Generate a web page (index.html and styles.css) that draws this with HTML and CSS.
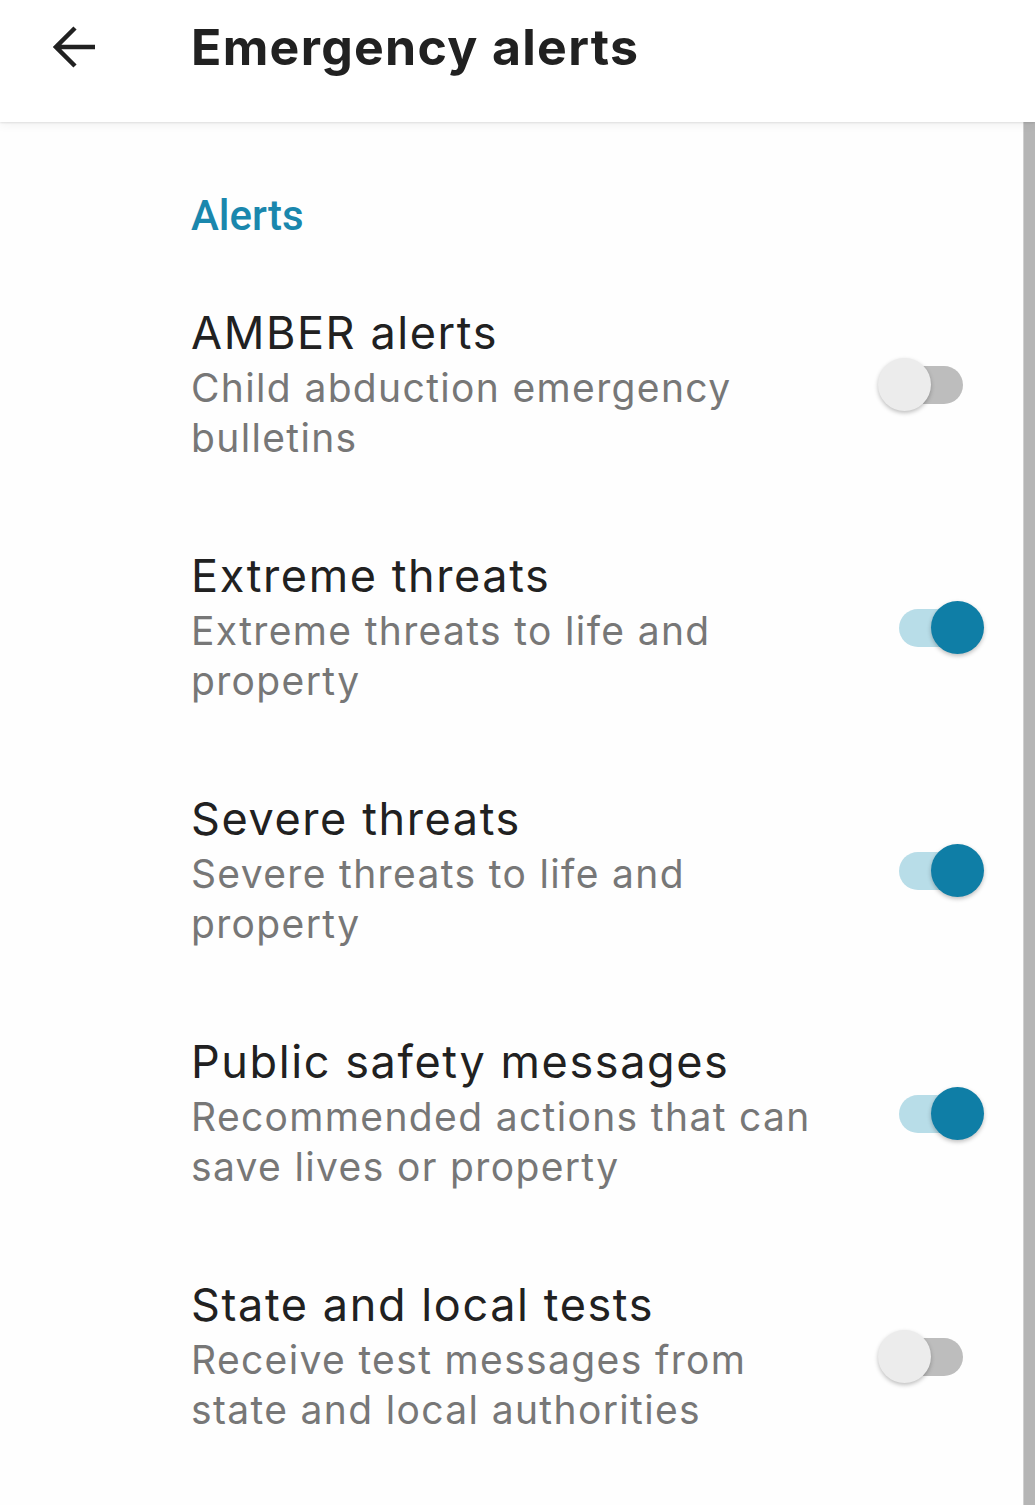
FILE: index.html
```html
<!DOCTYPE html>
<html lang="en">

<head>
    <meta charset="UTF-8">
    <meta name="viewport" content="width=device-width, initial-scale=1.0">
    <title>Emergency alerts</title>
    <link rel="stylesheet" href="styles.css">
</head>

<body>

    <div class="appbar">
        <div class="appbar-row">
            <button class="back-button" aria-label="Back">
                <svg width="44" height="42" viewBox="0 0 44 42">
                    <path d="M42 21H4M22 2L3 21l19 19" fill="none" stroke="#212121" stroke-width="4.5"
                        stroke-linejoin="miter" stroke-linecap="butt" />
                </svg>
            </button>
            <h1 class="appbar-title">Emergency alerts</h1>
        </div>
    </div>

    <div class="page">
        <div class="settings">
            <h2 class="category">Alerts</h2>

            <div class="pref-row">
                <div class="pref-text">
                    <div class="pref-title">AMBER alerts</div>
                    <div class="pref-summary">Child abduction emergency bulletins</div>
                </div>
                <div class="switch"><span class="track"></span><span class="thumb"></span></div>
            </div>

            <div class="pref-row">
                <div class="pref-text">
                    <div class="pref-title">Extreme threats</div>
                    <div class="pref-summary">Extreme threats to life and property</div>
                </div>
                <div class="switch on"><span class="track"></span><span class="thumb"></span></div>
            </div>

            <div class="pref-row">
                <div class="pref-text">
                    <div class="pref-title">Severe threats</div>
                    <div class="pref-summary">Severe threats to life and property</div>
                </div>
                <div class="switch on"><span class="track"></span><span class="thumb"></span></div>
            </div>

            <div class="pref-row">
                <div class="pref-text">
                    <div class="pref-title">Public safety messages</div>
                    <div class="pref-summary">Recommended actions that can save lives or property</div>
                </div>
                <div class="switch on"><span class="track"></span><span class="thumb"></span></div>
            </div>

            <div class="pref-row">
                <div class="pref-text">
                    <div class="pref-title">State and local tests</div>
                    <div class="pref-summary">Receive test messages from state and local authorities</div>
                </div>
                <div class="switch"><span class="track"></span><span class="thumb"></span></div>
            </div>
        </div>
        <div class="scrollbar"></div>
    </div>

</body>

</html>
```

FILE: styles.css
```css
body {
    font-family: Inter, "Noto Sans", sans-serif;
    margin: 0;
    padding: 0;
    background-color: #fff;
    color: #212121;
    width: 1035px;
    height: 1505px;
    overflow: hidden;
}

.appbar {
    height: 122px;
    background-color: #fff;
    position: relative;
    z-index: 2;
    box-shadow: 0 1px 2px rgba(0, 0, 0, 0.10), 0 3px 10px rgba(0, 0, 0, 0.05);
}

.appbar-row {
    height: 94px;
    display: flex;
    align-items: center;
}

.back-button {
    border: none;
    background: none;
    padding: 0;
    margin-left: 53px;
    width: 44px;
    height: 42px;
    display: flex;
}

.appbar-title {
    margin: 0 0 0 94px;
    font-size: 50px;
    font-weight: 700;
    letter-spacing: 1.3px;
    line-height: 56px;
    color: #212121;
}

.page {
    display: flex;
    height: 1383px;
}

.settings {
    flex: 1;
    padding: 69px 39px 0 191px;
    background-color: #fefefe;
}

.scrollbar {
    width: 11px;
    background-color: #b5b5b5;
    border-left: 1px solid #d0d0d0;
}

.category {
    margin: 0 0 21px 0;
    font-family: Roboto, sans-serif;
    font-size: 42px;
    font-weight: 500;
    line-height: 50px;
    color: #1a87ad;
}

.pref-row {
    display: flex;
    align-items: center;
    justify-content: space-between;
    padding: 41px 0 42px 0;
}

.pref-text {
    width: 660px;
}

.pref-title {
    font-size: 45px;
    line-height: 60px;
    letter-spacing: 1.6px;
    color: #212121;
}

.pref-summary {
    font-size: 39px;
    line-height: 50px;
    letter-spacing: 1.35px;
    color: #777;
}

.switch {
    position: relative;
    width: 106px;
    height: 56px;
    margin-top: 4px;
    flex: none;
}

.switch .track {
    position: absolute;
    left: 21px;
    top: 9px;
    width: 64px;
    height: 38px;
    border-radius: 19px;
    background-color: #bdbdbd;
}

.switch .thumb {
    position: absolute;
    left: 0;
    top: 1px;
    width: 53px;
    height: 53px;
    border-radius: 50%;
    background-color: #ececec;
    box-shadow: 0 2px 4px rgba(0, 0, 0, 0.25);
}

.switch.on .track {
    background-color: #b8dde8;
}

.switch.on .thumb {
    left: 53px;
    background-color: #0f7ea6;
}
```
